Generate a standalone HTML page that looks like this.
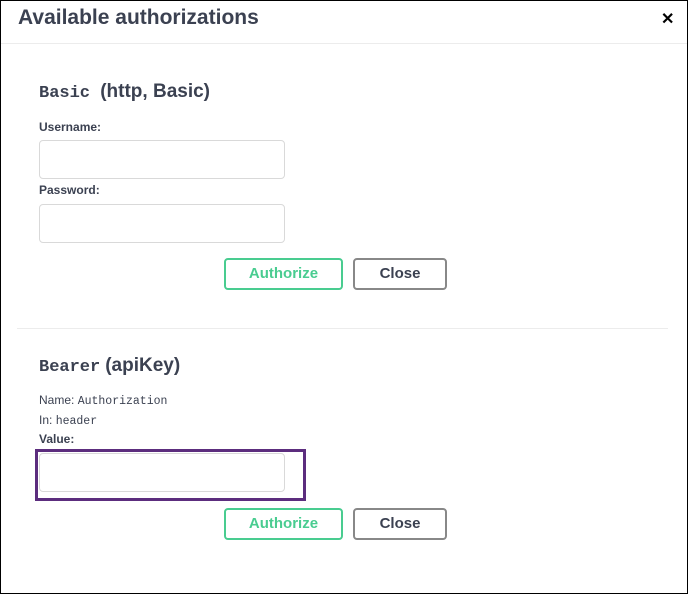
<!DOCTYPE html>
<html><head><style>
*{margin:0;padding:0;box-sizing:border-box}
body{width:688px;height:594px;background:#fff;font-family:"Liberation Sans",sans-serif;color:#3b4151;position:relative;overflow:hidden}
.frame{position:absolute;left:0;top:0;width:688px;height:594px;border:1px solid #000}
.abs{position:absolute}
.title{left:18px;top:6px;font-size:21px;font-weight:bold}
.x{left:661px;top:9px;font-size:16px;font-weight:bold;color:#000}
.hr{height:1px;background:#ececec}
.h{font-family:"Liberation Mono",monospace;font-size:17px;font-weight:bold}
.h span{font-family:"Liberation Sans",sans-serif;font-size:19px}
.lbl{font-size:12px;font-weight:bold}
.inp{width:246px;height:39px;border:1px solid #d9d9d9;border-radius:4px;background:#fff}
.btn{height:32px;border:2px solid;border-radius:4px;font-size:15px;font-weight:bold;text-align:center;line-height:28px}
.auth{width:119px;border-color:#49cc90;color:#49cc90}
.close{width:94px;border-color:#888;color:#3b4151}
.sm{font-size:12px;color:#3b4151}
.mono{font-family:"Liberation Mono",monospace;font-size:11.5px}
</style></head><body>
<div class="frame"></div>
<div class="abs title">Available authorizations</div>
<div class="abs x">✕</div>
<div class="abs hr" style="left:1px;top:43px;width:686px"></div>
<div class="abs h" style="left:39px;top:81px">Basic <span>(http, Basic)</span></div>
<div class="abs lbl" style="left:39px;top:120px">Username:</div>
<div class="abs inp" style="left:39px;top:140px"></div>
<div class="abs lbl" style="left:39px;top:183px">Password:</div>
<div class="abs inp" style="left:39px;top:204px"></div>
<div class="abs btn auth" style="left:224px;top:258px">Authorize</div>
<div class="abs btn close" style="left:353px;top:258px">Close</div>
<div class="abs hr" style="left:17px;top:328px;width:651px"></div>
<div class="abs h" style="left:39px;top:355px">Bearer<span style="margin-left:5px">(apiKey)</span></div>
<div class="abs sm" style="left:39px;top:393px">Name: <span class="mono">Authorization</span></div>
<div class="abs sm" style="left:39px;top:413px">In: <span class="mono">header</span></div>
<div class="abs lbl" style="left:39px;top:432px">Value:</div>
<div class="abs" style="left:35px;top:449px;width:271px;height:52px;border:3px solid #5c2d7e"></div>
<div class="abs inp" style="left:39px;top:453px"></div>
<div class="abs btn auth" style="left:224px;top:508px">Authorize</div>
<div class="abs btn close" style="left:353px;top:508px">Close</div>
</body></html>
